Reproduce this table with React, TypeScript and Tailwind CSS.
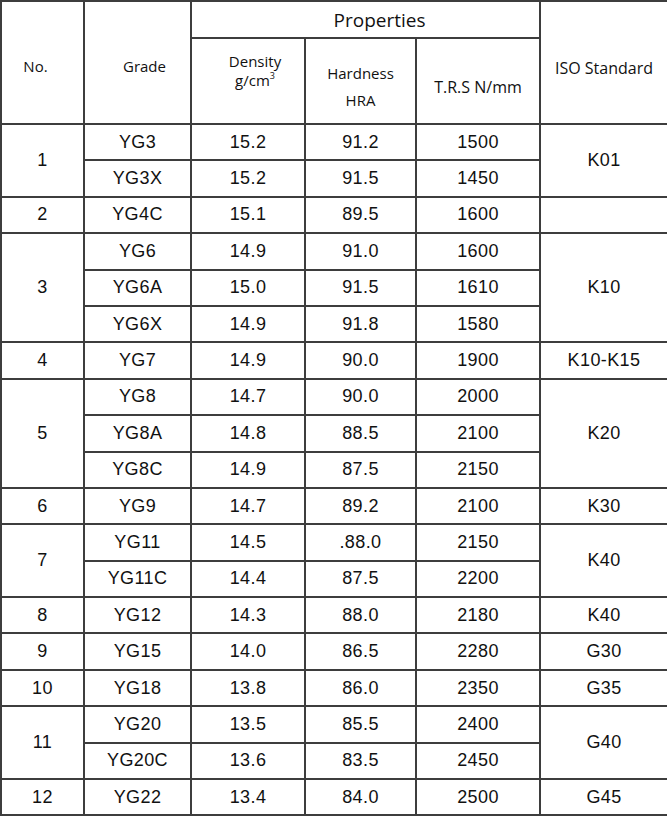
import React from "react";

type Row = {
  no?: { label: string; span: number };
  grade: string;
  density: string;
  hardness: string;
  trs: string;
  iso?: { label: string; span: number };
};

const rows: Row[] = [
  { no: { label: "1", span: 2 }, grade: "YG3", density: "15.2", hardness: "91.2", trs: "1500", iso: { label: "K01", span: 2 } },
  { grade: "YG3X", density: "15.2", hardness: "91.5", trs: "1450" },
  { no: { label: "2", span: 1 }, grade: "YG4C", density: "15.1", hardness: "89.5", trs: "1600", iso: { label: "", span: 1 } },
  { no: { label: "3", span: 3 }, grade: "YG6", density: "14.9", hardness: "91.0", trs: "1600", iso: { label: "K10", span: 3 } },
  { grade: "YG6A", density: "15.0", hardness: "91.5", trs: "1610" },
  { grade: "YG6X", density: "14.9", hardness: "91.8", trs: "1580" },
  { no: { label: "4", span: 1 }, grade: "YG7", density: "14.9", hardness: "90.0", trs: "1900", iso: { label: "K10-K15", span: 1 } },
  { no: { label: "5", span: 3 }, grade: "YG8", density: "14.7", hardness: "90.0", trs: "2000", iso: { label: "K20", span: 3 } },
  { grade: "YG8A", density: "14.8", hardness: "88.5", trs: "2100" },
  { grade: "YG8C", density: "14.9", hardness: "87.5", trs: "2150" },
  { no: { label: "6", span: 1 }, grade: "YG9", density: "14.7", hardness: "89.2", trs: "2100", iso: { label: "K30", span: 1 } },
  { no: { label: "7", span: 2 }, grade: "YG11", density: "14.5", hardness: ".88.0", trs: "2150", iso: { label: "K40", span: 2 } },
  { grade: "YG11C", density: "14.4", hardness: "87.5", trs: "2200" },
  { no: { label: "8", span: 1 }, grade: "YG12", density: "14.3", hardness: "88.0", trs: "2180", iso: { label: "K40", span: 1 } },
  { no: { label: "9", span: 1 }, grade: "YG15", density: "14.0", hardness: "86.5", trs: "2280", iso: { label: "G30", span: 1 } },
  { no: { label: "10", span: 1 }, grade: "YG18", density: "13.8", hardness: "86.0", trs: "2350", iso: { label: "G35", span: 1 } },
  { no: { label: "11", span: 2 }, grade: "YG20", density: "13.5", hardness: "85.5", trs: "2400", iso: { label: "G40", span: 2 } },
  { grade: "YG20C", density: "13.6", hardness: "83.5", trs: "2450" },
  { no: { label: "12", span: 1 }, grade: "YG22", density: "13.4", hardness: "84.0", trs: "2500", iso: { label: "G45", span: 1 } },
];

const cell = "border-2 border-[#3d3d3d] text-center align-middle p-0";
const head = "font-['Open_Sans','Noto_Sans',sans-serif] text-[#111]";

export default function App() {
  return (
    <div className="w-[667px] h-[816px] bg-white overflow-hidden">
      <table className="w-[667px] table-fixed border-collapse font-['Liberation_Sans',Arial,sans-serif] text-[18px] text-[#111] tracking-[0.4px]">
        <colgroup>
          <col className="w-[83px]" />
          <col className="w-[107px]" />
          <col className="w-[114px]" />
          <col className="w-[111px]" />
          <col className="w-[124px]" />
          <col className="w-[128px]" />
        </colgroup>
        <thead className={head}>
          <tr className="h-[37px]">
            <td rowSpan={2} className={`${cell} text-[15px] tracking-normal pr-[14px] pt-[8px]`}>
              No.
            </td>
            <td rowSpan={2} className={`${cell} text-[15px] tracking-normal pl-[14px] pt-[8px]`}>
              Grade
            </td>
            <td colSpan={3} className={`${cell} text-[19px] tracking-normal pl-[28px] pt-[2px]`}>
              Properties
            </td>
            <td rowSpan={2} className={`${cell} text-[16px] tracking-normal pt-[10px]`}>
              ISO Standard
            </td>
          </tr>
          <tr className="h-[86px]">
            <td className={`${cell} text-[15px] leading-[19px] tracking-normal pb-[20px] pl-[14px]`}>
              Density
              <br />
              g/cm<span className="inline-block align-top text-[9px] leading-none">3</span>
            </td>
            <td className={`${cell} text-[15px] leading-[27px] tracking-normal pt-[12px]`}>
              Hardness
              <br />
              HRA
            </td>
            <td className={`${cell} text-[16px] tracking-normal pt-[12px]`}>T.R.S N/mm</td>
          </tr>
        </thead>
        <tbody>
          {rows.map((r) => (
            <tr key={r.grade} className="h-[36.4px]">
              {r.no && (
                <td rowSpan={r.no.span} className={cell}>
                  {r.no.label}
                </td>
              )}
              <td className={cell}>{r.grade}</td>
              <td className={cell}>{r.density}</td>
              <td className={cell}>{r.hardness}</td>
              <td className={cell}>{r.trs}</td>
              {r.iso && (
                <td rowSpan={r.iso.span} className={cell}>
                  {r.iso.label}
                </td>
              )}
            </tr>
          ))}
        </tbody>
      </table>
    </div>
  );
}
